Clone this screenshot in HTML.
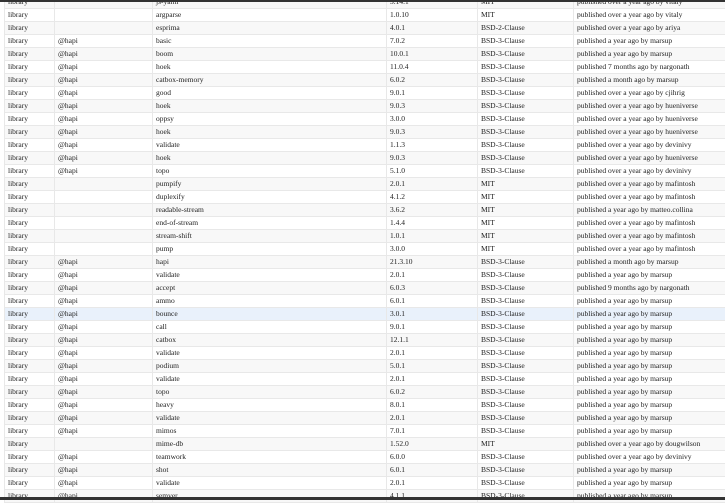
<!DOCTYPE html><html><head><style>
body{margin:0;width:725px;height:500px;overflow:hidden;background:#fff;position:relative;font-family:"Liberation Serif",serif;font-size:7.5px;color:#222}
table{position:absolute;top:-4px;left:4px;border-collapse:collapse;width:721px;table-layout:fixed}
td{height:12px;padding:0 0 0 3px;border-bottom:1px solid #e8e8e8;border-left:1px solid #e8e8e8;white-space:nowrap;overflow:hidden;line-height:12px}
tr:nth-child(odd) td{background:#f8f8f8}
tr.h td{background:#e9f1fb}
.top{position:absolute;top:0;left:0;width:725px;height:2px;background:#333}
.bot{position:absolute;bottom:0;left:0;width:725px;height:3px;background:#333}
</style></head><body>
<table>
<col style="width:50px"><col style="width:98px"><col style="width:234px"><col style="width:91px"><col style="width:96px"><col>
<tr><td>library</td><td></td><td>js-yaml</td><td>3.14.1</td><td>MIT</td><td>published over a year ago by vitaly</td></tr>
<tr><td>library</td><td></td><td>argparse</td><td>1.0.10</td><td>MIT</td><td>published over a year ago by vitaly</td></tr>
<tr><td>library</td><td></td><td>esprima</td><td>4.0.1</td><td>BSD-2-Clause</td><td>published over a year ago by ariya</td></tr>
<tr><td>library</td><td>@hapi</td><td>basic</td><td>7.0.2</td><td>BSD-3-Clause</td><td>published a year ago by marsup</td></tr>
<tr><td>library</td><td>@hapi</td><td>boom</td><td>10.0.1</td><td>BSD-3-Clause</td><td>published a year ago by marsup</td></tr>
<tr><td>library</td><td>@hapi</td><td>hoek</td><td>11.0.4</td><td>BSD-3-Clause</td><td>published 7 months ago by nargonath</td></tr>
<tr><td>library</td><td>@hapi</td><td>catbox-memory</td><td>6.0.2</td><td>BSD-3-Clause</td><td>published a month ago by marsup</td></tr>
<tr><td>library</td><td>@hapi</td><td>good</td><td>9.0.1</td><td>BSD-3-Clause</td><td>published over a year ago by cjihrig</td></tr>
<tr><td>library</td><td>@hapi</td><td>hoek</td><td>9.0.3</td><td>BSD-3-Clause</td><td>published over a year ago by hueniverse</td></tr>
<tr><td>library</td><td>@hapi</td><td>oppsy</td><td>3.0.0</td><td>BSD-3-Clause</td><td>published over a year ago by hueniverse</td></tr>
<tr><td>library</td><td>@hapi</td><td>hoek</td><td>9.0.3</td><td>BSD-3-Clause</td><td>published over a year ago by hueniverse</td></tr>
<tr><td>library</td><td>@hapi</td><td>validate</td><td>1.1.3</td><td>BSD-3-Clause</td><td>published over a year ago by devinivy</td></tr>
<tr><td>library</td><td>@hapi</td><td>hoek</td><td>9.0.3</td><td>BSD-3-Clause</td><td>published over a year ago by hueniverse</td></tr>
<tr><td>library</td><td>@hapi</td><td>topo</td><td>5.1.0</td><td>BSD-3-Clause</td><td>published over a year ago by devinivy</td></tr>
<tr><td>library</td><td></td><td>pumpify</td><td>2.0.1</td><td>MIT</td><td>published over a year ago by mafintosh</td></tr>
<tr><td>library</td><td></td><td>duplexify</td><td>4.1.2</td><td>MIT</td><td>published over a year ago by mafintosh</td></tr>
<tr><td>library</td><td></td><td>readable-stream</td><td>3.6.2</td><td>MIT</td><td>published a year ago by matteo.collina</td></tr>
<tr><td>library</td><td></td><td>end-of-stream</td><td>1.4.4</td><td>MIT</td><td>published over a year ago by mafintosh</td></tr>
<tr><td>library</td><td></td><td>stream-shift</td><td>1.0.1</td><td>MIT</td><td>published over a year ago by mafintosh</td></tr>
<tr><td>library</td><td></td><td>pump</td><td>3.0.0</td><td>MIT</td><td>published over a year ago by mafintosh</td></tr>
<tr><td>library</td><td>@hapi</td><td>hapi</td><td>21.3.10</td><td>BSD-3-Clause</td><td>published a month ago by marsup</td></tr>
<tr><td>library</td><td>@hapi</td><td>validate</td><td>2.0.1</td><td>BSD-3-Clause</td><td>published a year ago by marsup</td></tr>
<tr><td>library</td><td>@hapi</td><td>accept</td><td>6.0.3</td><td>BSD-3-Clause</td><td>published 9 months ago by nargonath</td></tr>
<tr><td>library</td><td>@hapi</td><td>ammo</td><td>6.0.1</td><td>BSD-3-Clause</td><td>published a year ago by marsup</td></tr>
<tr class="h"><td>library</td><td>@hapi</td><td>bounce</td><td>3.0.1</td><td>BSD-3-Clause</td><td>published a year ago by marsup</td></tr>
<tr><td>library</td><td>@hapi</td><td>call</td><td>9.0.1</td><td>BSD-3-Clause</td><td>published a year ago by marsup</td></tr>
<tr><td>library</td><td>@hapi</td><td>catbox</td><td>12.1.1</td><td>BSD-3-Clause</td><td>published a year ago by marsup</td></tr>
<tr><td>library</td><td>@hapi</td><td>validate</td><td>2.0.1</td><td>BSD-3-Clause</td><td>published a year ago by marsup</td></tr>
<tr><td>library</td><td>@hapi</td><td>podium</td><td>5.0.1</td><td>BSD-3-Clause</td><td>published a year ago by marsup</td></tr>
<tr><td>library</td><td>@hapi</td><td>validate</td><td>2.0.1</td><td>BSD-3-Clause</td><td>published a year ago by marsup</td></tr>
<tr><td>library</td><td>@hapi</td><td>topo</td><td>6.0.2</td><td>BSD-3-Clause</td><td>published a year ago by marsup</td></tr>
<tr><td>library</td><td>@hapi</td><td>heavy</td><td>8.0.1</td><td>BSD-3-Clause</td><td>published a year ago by marsup</td></tr>
<tr><td>library</td><td>@hapi</td><td>validate</td><td>2.0.1</td><td>BSD-3-Clause</td><td>published a year ago by marsup</td></tr>
<tr><td>library</td><td>@hapi</td><td>mimos</td><td>7.0.1</td><td>BSD-3-Clause</td><td>published a year ago by marsup</td></tr>
<tr><td>library</td><td></td><td>mime-db</td><td>1.52.0</td><td>MIT</td><td>published over a year ago by dougwilson</td></tr>
<tr><td>library</td><td>@hapi</td><td>teamwork</td><td>6.0.0</td><td>BSD-3-Clause</td><td>published over a year ago by devinivy</td></tr>
<tr><td>library</td><td>@hapi</td><td>shot</td><td>6.0.1</td><td>BSD-3-Clause</td><td>published a year ago by marsup</td></tr>
<tr><td>library</td><td>@hapi</td><td>validate</td><td>2.0.1</td><td>BSD-3-Clause</td><td>published a year ago by marsup</td></tr>
<tr><td>library</td><td>@hapi</td><td>semver</td><td>4.1.1</td><td>BSD-3-Clause</td><td>published a year ago by marsup</td></tr>
</table>
<div class="top"></div><div class="bot"></div>
</body></html>
